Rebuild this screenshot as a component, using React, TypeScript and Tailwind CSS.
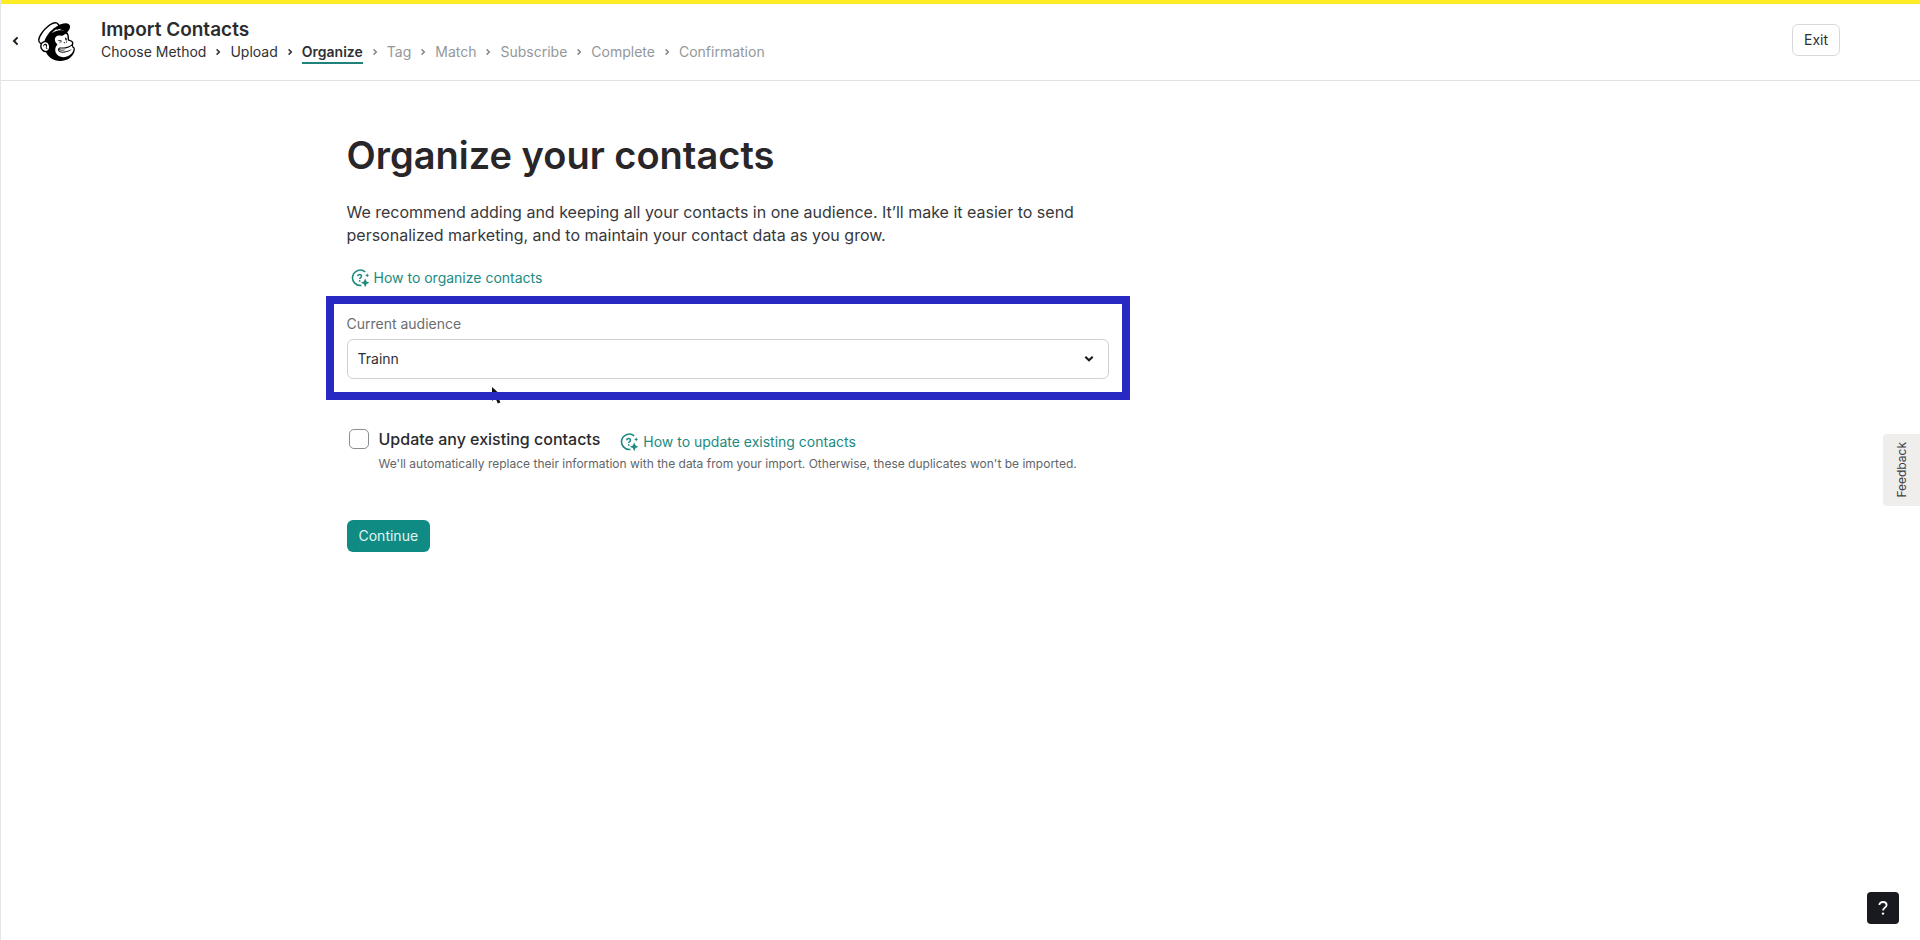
import { Fragment } from "react";
import { SiMailchimp } from "react-icons/si";

const steps = [
  { label: "Choose Method", state: "done" },
  { label: "Upload", state: "done" },
  { label: "Organize", state: "current" },
  { label: "Tag", state: "todo" },
  { label: "Match", state: "todo" },
  { label: "Subscribe", state: "todo" },
  { label: "Complete", state: "todo" },
  { label: "Confirmation", state: "todo" },
];

const stepClass: Record<string, string> = {
  done: "text-[#2f3033]",
  current: "border-b-2 border-[#20807a] font-semibold text-[#2f3033]",
  todo: "text-[#93979a]",
};

function StepChevron({ muted }: { muted: boolean }) {
  return (
    <svg
      viewBox="0 0 6 8"
      aria-hidden="true"
      className={muted ? "h-2 w-1.5 text-[#85898c]" : "h-2 w-1.5 text-[#2f3033]"}
    >
      <path d="M1.6 1.4 4.3 4 1.6 6.6" fill="none" stroke="currentColor" strokeWidth="1.5" />
    </svg>
  );
}

function HelpSparkIcon() {
  return (
    <svg viewBox="0 0 18 18" aria-hidden="true" className="size-[18px] shrink-0" fill="none" stroke="currentColor">
      <path d="M14.2 2.9A7.7 7.7 0 1 0 10.4 16.4" strokeWidth="1.6" />
      <path d="M6.8 7.2c0-2.3 3.7-2.2 3.7 0 0 1.4-1.8 1.4-1.8 2.9" strokeWidth="1.5" />
      <circle cx="8.7" cy="11.9" r="0.9" fill="currentColor" stroke="none" />
      <path d="M14.2 9.4l1.4 3.1 3 1.3-3 1.3-1.4 3.1-1.4-3.1-3-1.3 3-1.3z" fill="currentColor" stroke="none" />
      <path d="M16.2 4.2l.7 1.5 1.5.7-1.5.7-.7 1.5-.7-1.5-1.5-.7 1.5-.7z" fill="currentColor" stroke="none" />
    </svg>
  );
}

function HelpLink({ children }: { children: string }) {
  return (
    <a href="#help" className="inline-flex items-center gap-[5px] text-sm leading-5 text-[#218a7f]">
      <HelpSparkIcon />
      {children}
    </a>
  );
}

function Header() {
  return (
    <header className="flex items-start border-t-4 border-b border-t-[#ffec25] border-b-[#dfe3e5] pr-20 pb-4 pl-[11px]">
      <button type="button" aria-label="Back" className="mt-[31px] flex h-3 w-2 items-center text-[#241c15]">
        <svg viewBox="0 0 8 12" className="h-3 w-2" aria-hidden="true">
          <path d="M5.6 2.4 2 6l3.6 3.6" fill="none" stroke="currentColor" strokeWidth="2" />
        </svg>
      </button>
      <SiMailchimp className="mt-[18px] ml-[17px] size-[39px] text-black" aria-hidden="true" />
      <div className="mt-3.5 ml-[25px]">
        <h2 className="text-[19px] leading-6 font-semibold text-[#2a2b2e]">Import Contacts</h2>
        <nav aria-label="Progress" className="flex items-start gap-2 text-sm leading-5">
          {steps.map((step, i) => (
            <Fragment key={step.label}>
              {i > 0 && (
                <span className="flex h-5 items-center px-px">
                  <StepChevron muted={step.state === "todo"} />
                </span>
              )}
              <span className={stepClass[step.state]}>{step.label}</span>
            </Fragment>
          ))}
        </nav>
      </div>
      <button
        type="button"
        className="mt-5 ml-auto h-8 rounded-md border border-[#d6d8da] px-[11px] text-sm text-[#2f3033]"
      >
        Exit
      </button>
    </header>
  );
}

export default function App() {
  return (
    <div className="min-h-screen border-l border-[#e3e5e8] bg-white font-['Inter','Liberation_Sans',sans-serif] text-[#2a2b2e]">
      <Header />
      <main className="mx-auto max-w-[1228px] pt-12">
        <div className="max-w-[762px]">
          <h1 className="text-[38px] leading-[52px] font-semibold text-[#29262a]">Organize your contacts</h1>
          <p className="mt-5 text-base leading-[23px] text-[#37383b]">
            We recommend adding and keeping all your contacts in one audience. It’ll make it easier to send
            personalized marketing, and to maintain your contact data as you grow.
          </p>
          <div className="mt-[21px] flex pl-1">
            <HelpLink>How to organize contacts</HelpLink>
          </div>

          <div className="relative -mx-[21px] mt-2">
            <svg
              viewBox="0 0 12 18"
              aria-hidden="true"
              className="absolute top-[91px] left-[166px] h-[18px] w-3"
            >
              <path d="M0 0v14l3.4-3 2.4 5.6 2.6-1.2L6.2 10H11z" fill="#111" />
            </svg>
            <div className="relative border-8 border-[#2828c2] px-[13px] pt-2.5 pb-[13px]">
              <label htmlFor="audience" className="block text-sm leading-5 text-[#6a6d70]">
                Current audience
              </label>
              <div className="relative mt-[5px]">
                <select
                  id="audience"
                  className="h-10 w-full appearance-none rounded-md border border-[#cfd1d3] bg-white px-2.5 text-sm text-[#2f3033]"
                >
                  <option>Trainn</option>
                </select>
                <svg
                  viewBox="0 0 10 8"
                  aria-hidden="true"
                  className="pointer-events-none absolute top-4 right-[15px] h-2 w-2.5"
                >
                  <path d="M1.3 1.8 5 5.3l3.7-3.5" fill="none" stroke="#1c1c1f" strokeWidth="2.2" />
                </svg>
              </div>
            </div>
          </div>

          <div className="mt-7 flex items-start gap-2.5 pl-0.5">
            <input
              id="update"
              type="checkbox"
              aria-describedby="update-hint"
              className="mt-px size-5 shrink-0 appearance-none rounded-[5px] border border-[#8b8d90] bg-white checked:bg-[#0f8b84]"
            />
            <div>
              <div className="flex items-start gap-5">
                <label htmlFor="update" className="text-base leading-[23px] font-medium">
                  Update any existing contacts
                </label>
                <div className="flex pt-1">
                  <HelpLink>How to update existing contacts</HelpLink>
                </div>
              </div>
              <p id="update-hint" className="mt-1 text-xs leading-4 text-[#626568]">
                We'll automatically replace their information with the data from your import. Otherwise, these duplicates
                won't be imported.
              </p>
            </div>
          </div>

          <button type="button" className="mt-12 h-8 rounded-md bg-[#0f8b84] px-3 text-sm text-[#e2f5f2]">
            Continue
          </button>
        </div>
      </main>

      <button
        type="button"
        className="fixed top-[434px] right-0 flex h-[72px] w-[37px] items-center justify-center rounded-l-sm bg-[#efeeed] text-xs text-[#403f42]"
      >
        <span className="rotate-180 [writing-mode:vertical-rl]">Feedback</span>
      </button>
      <button
        type="button"
        aria-label="Help"
        className="fixed right-[21px] bottom-4 flex size-8 items-center justify-center rounded bg-[#191a1f] text-white"
      >
        <svg viewBox="0 0 12 16" aria-hidden="true" className="h-4 w-3">
          <path d="M2.4 5C2.4 1 9.6 1 9.6 5c0 2.7-3.6 2.6-3.6 5.6" fill="none" stroke="currentColor" strokeWidth="1.8" />
          <circle cx="6" cy="13.6" r="1.2" fill="currentColor" />
        </svg>
      </button>
    </div>
  );
}
